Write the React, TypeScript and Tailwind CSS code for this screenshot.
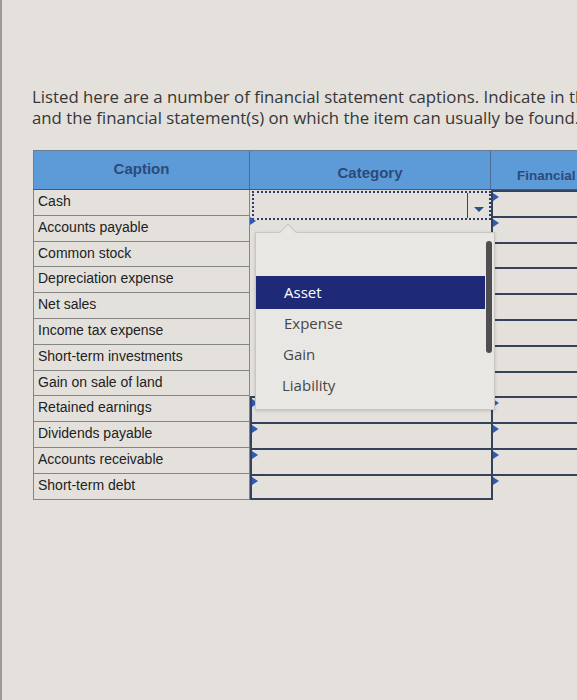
import React from "react";

const rows = [
  "Cash",
  "Accounts payable",
  "Common stock",
  "Depreciation expense",
  "Net sales",
  "Income tax expense",
  "Short-term investments",
  "Gain on sale of land",
  "Retained earnings",
  "Dividends payable",
  "Accounts receivable",
  "Short-term debt",
];

function Marker() {
  return (
    <span className="absolute left-0 top-[1px] w-0 h-0 border-y-[4px] border-y-transparent border-l-[6px] border-l-[#2d5bb5]" />
  );
}

export default function App() {
  return (
    <div className="relative w-[577px] h-[700px] overflow-hidden bg-[#e4e1dc] border-l-2 border-[#9c9a96]">
      <div
        className="pt-[86px] pl-[30px] text-[16.8px] leading-[21px] text-[#363636] whitespace-nowrap"
        style={{ fontFamily: "'Open Sans', sans-serif" }}
      >
        <div>Listed here are a number of financial statement captions. Indicate in the</div>
        <div>and the financial statement(s) on which the item can usually be found.</div>
      </div>

      <div
        className="relative mt-[22px] ml-[31px] w-[680px]"
        style={{ fontFamily: "'Liberation Sans', Arial, sans-serif" }}
      >
        {/* header */}
        <div className="flex h-[40px] bg-[#5c9bd8] border-t border-[#6a7d95] border-b border-b-[#3d5a80]">
          <div className="w-[217px] flex items-center justify-center border-l border-[#6c7d90] border-r border-r-[#4d6d96] text-[15px] font-bold text-[#2c4a78] pb-[2px]">
            Caption
          </div>
          <div className="w-[241px] flex items-center justify-center border-r border-[#4d6d96] text-[15px] font-bold text-[#2c4a78] pt-[6px]">
            Category
          </div>
          <div className="flex-1 flex items-center pl-[26px] text-[13.5px] font-bold text-[#2c4a78] pt-[12px]">
            Financial Statement(s)
          </div>
        </div>

        {/* rows */}
        {rows.map((r, i) => (
          <div key={r} className="flex h-[25.8px]">
            <div className="w-[217px] border-l border-b border-r border-[#858585] pl-[4px] text-[14px] text-[#222] leading-[22px]">
              {r}
            </div>
            <div
              className={
                "relative w-[241px] " +
                (i >= 8 ? "border-l-2 border-[#34425e] border-t-2 " : "") +
                (i === 11 ? "border-b-2 " : "")
              }
            >
              {i === 0 && (
                <div className="absolute left-[2px] right-0 top-[1px] bottom-[-4px] border-2 border-dotted border-[#2d3e6a] flex justify-end">
                  <div className="w-[22px] border-l border-[#444] flex items-center justify-center pt-[8px]">
                    <span className="w-0 h-0 border-x-[5px] border-x-transparent border-t-[5px] border-t-[#2d4f8c]" />
                  </div>
                </div>
              )}
              {(i === 1 || i >= 8) && <Marker />}
            </div>
            <div className="relative flex-1 border-l-2 border-[#34425e] border-t-2">
              {i <= 1 || i >= 8 ? <Marker /> : null}
            </div>
          </div>
        ))}

        {/* dropdown popup */}
        <div
          className="absolute left-[222px] top-[82px] w-[240px] h-[178px] bg-[#e9e7e3] border border-[#c9c6c1] shadow-[0_1px_3px_rgba(0,0,0,0.15)]"
          style={{ fontFamily: "'Open Sans', sans-serif" }}
        >
          <div className="absolute left-[26px] top-[-7px] w-[12px] h-[12px] rotate-45 bg-[#e9e7e3] border-l border-t border-[#c9c6c1]" />
          <div className="absolute right-[2px] top-[8px] w-[6px] h-[112px] rounded-full bg-[#4e4e4e]" />
          <div className="pt-[43px] pr-[9px]">
            <div className="h-[33px] bg-[#1e2a78] text-white text-[15px] flex items-center pl-[28px]">
              Asset
            </div>
            <div className="h-[31px] text-[15px] text-[#474747] flex items-center pl-[28px] mt-[-1px]">
              Expense
            </div>
            <div className="h-[31px] text-[15px] text-[#474747] flex items-center pl-[27px]">
              Gain
            </div>
            <div className="h-[31px] text-[15px] text-[#474747] flex items-center pl-[26px]">
              Liability
            </div>
          </div>
        </div>
      </div>
    </div>
  );
}
